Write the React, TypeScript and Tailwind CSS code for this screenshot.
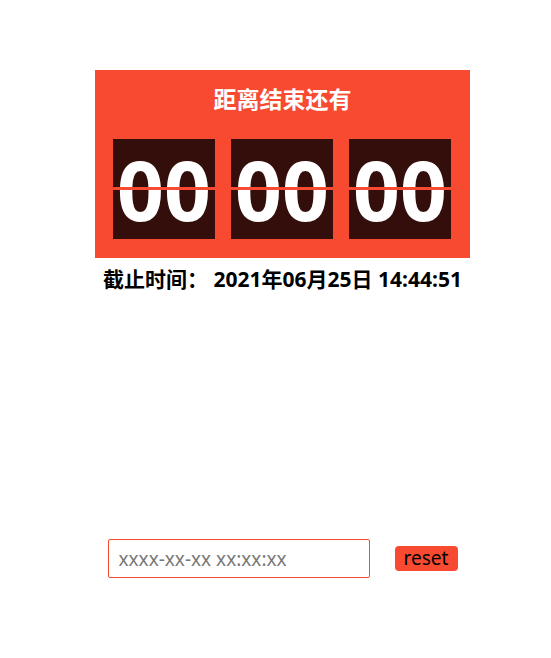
export default function App() {
  const parts = ["00", "00", "00"];
  return (
    <div
      className="min-h-screen bg-white pt-[70px]"
      style={{ fontFamily: '"Noto Sans", "Noto Sans CJK SC", sans-serif' }}
    >
      <div className="ml-[95px] w-[375px]">
        <div className="h-[188px] bg-[#f84a31] pt-[14px]">
          <h1 className="text-center text-[23px] font-bold leading-[30px] text-white">距离结束还有</h1>
          <div className="mt-[25px] flex gap-[16px] pl-[18px]">
            {parts.map((p, i) => (
              <div key={i} className="relative flex h-[100px] w-[102px] items-center justify-center bg-[#330e0b]">
                <span className="text-[82px] font-bold leading-[100px] text-white">{p}</span>
                <div className="absolute left-0 right-0 top-[48px] h-[3px] bg-[#f84a31]" />
              </div>
            ))}
          </div>
        </div>
        <p className="mt-[6px] text-center text-[21px] font-bold leading-[30px] text-black">
          截止时间：&nbsp;2021年06月25日 14:44:51
        </p>
        <div className="mt-[245px] flex items-center justify-center gap-[25px]">
          <input
            placeholder="xxxx-xx-xx xx:xx:xx"
            className="h-[39px] w-[262px] rounded-[2px] border border-[#f84a31] px-[10px] text-[19px] text-black outline-none placeholder:text-[#777]"
          />
          <button className="h-[25px] w-[63px] rounded-[4px] bg-[#f84a31] text-[19px] leading-none text-black">
            reset
          </button>
        </div>
      </div>
    </div>
  );
}
